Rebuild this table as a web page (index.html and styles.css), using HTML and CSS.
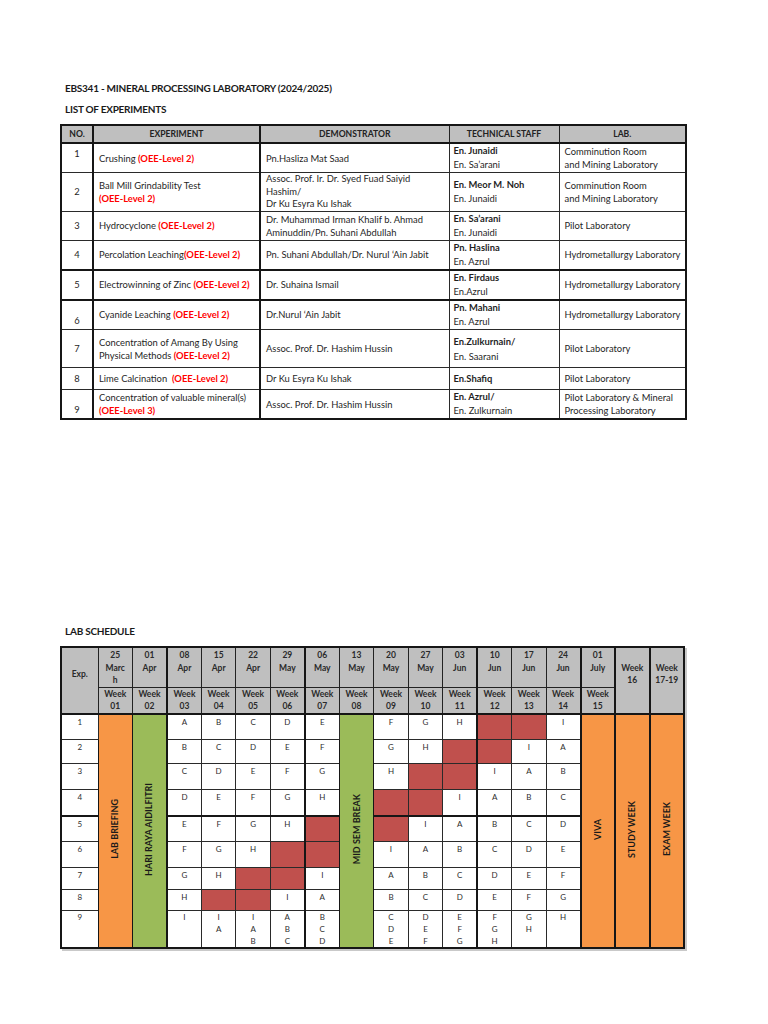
FILE: index.html
```html
<!DOCTYPE html>
<html>
<head>
<meta charset="utf-8">
<title>EBS341 Mineral Processing Laboratory</title>
<link rel="stylesheet" href="styles.css">
</head>
<body>
<div class="page">
  <h1 class="title">EBS341 - MINERAL PROCESSING LABORATORY (2024/2025)</h1>
  <h2 class="subtitle">LIST OF EXPERIMENTS</h2>

  <table class="exp">
    <colgroup>
      <col class="c-no"><col class="c-exp"><col class="c-dem"><col class="c-tech"><col class="c-lab">
    </colgroup>
    <thead>
      <tr><th>NO.</th><th class="thick-l">EXPERIMENT</th><th class="thick-l">DEMONSTRATOR</th><th>TECHNICAL STAFF</th><th>LAB.</th></tr>
    </thead>
    <tbody>
      <tr class="r1">
        <td class="no vt">1</td>
        <td class="thick-l">Crushing <span class="oee">(OEE-Level 2)</span></td>
        <td class="thick-l">Pn.Hasliza Mat Saad</td>
        <td class="tech"><b>En. Junaidi</b><br>En. Sa’arani</td>
        <td>Comminution Room<br>and Mining Laboratory</td>
      </tr>
      <tr class="r2">
        <td class="no">2</td>
        <td class="thick-l">Ball Mill Grindability Test<br><span class="oee">(OEE-Level 2)</span></td>
        <td class="thick-l dem3">Assoc. Prof. Ir. Dr. Syed Fuad Saiyid<br>Hashim/<br>Dr Ku Esyra Ku Ishak</td>
        <td class="tech"><b>En. Meor M. Noh</b><br>En. Junaidi</td>
        <td>Comminution Room<br>and Mining Laboratory</td>
      </tr>
      <tr class="r3">
        <td class="no">3</td>
        <td class="thick-l">Hydrocyclone <span class="oee">(OEE-Level 2)</span></td>
        <td class="thick-l">Dr. Muhammad Irman Khalif b. Ahmad<br>Aminuddin/Pn. Suhani Abdullah</td>
        <td class="tech"><b>En. Sa’arani</b><br>En. Junaidi</td>
        <td>Pilot Laboratory</td>
      </tr>
      <tr class="r4 thick-b">
        <td class="no">4</td>
        <td class="thick-l">Percolation Leaching<span class="oee">(OEE-Level 2)</span></td>
        <td class="thick-l">Pn. Suhani Abdullah/Dr. Nurul ‘Ain Jabit</td>
        <td class="tech"><b>Pn. Haslina</b><br>En. Azrul</td>
        <td>Hydrometallurgy Laboratory</td>
      </tr>
      <tr class="r5 thick-b">
        <td class="no">5</td>
        <td class="thick-l">Electrowinning of Zinc <span class="oee">(OEE-Level 2)</span></td>
        <td class="thick-l">Dr. Suhaina Ismail</td>
        <td class="tech"><b>En. Firdaus</b><br>En.Azrul</td>
        <td>Hydrometallurgy Laboratory</td>
      </tr>
      <tr class="r6">
        <td class="no vb">6</td>
        <td class="thick-l">Cyanide Leaching <span class="oee">(OEE-Level 2)</span></td>
        <td class="thick-l">Dr.Nurul ‘Ain Jabit</td>
        <td class="tech"><b>Pn. Mahani</b><br>En. Azrul</td>
        <td>Hydrometallurgy Laboratory</td>
      </tr>
      <tr class="r7">
        <td class="no">7</td>
        <td class="thick-l">Concentration of Amang By Using<br>Physical Methods <span class="oee">(OEE-Level 2)</span></td>
        <td class="thick-l">Assoc. Prof. Dr. Hashim Hussin</td>
        <td class="tech tall"><b>En.Zulkurnain/</b><br>En. Saarani</td>
        <td>Pilot Laboratory</td>
      </tr>
      <tr class="r8">
        <td class="no">8</td>
        <td class="thick-l">Lime Calcination &nbsp;<span class="oee">(OEE-Level 2)</span></td>
        <td class="thick-l">Dr Ku Esyra Ku Ishak</td>
        <td class="tech"><b>En.Shafiq</b></td>
        <td>Pilot Laboratory</td>
      </tr>
      <tr class="r9">
        <td class="no vb">9</td>
        <td class="thick-l">Concentration of valuable mineral(s)<br><span class="oee">(OEE-Level 3)</span></td>
        <td class="thick-l">Assoc. Prof. Dr. Hashim Hussin</td>
        <td class="tech"><b>En. Azrul/</b><br>En. Zulkurnain</td>
        <td>Pilot Laboratory &amp; Mineral<br>Processing Laboratory</td>
      </tr>
    </tbody>
  </table>

  <h2 class="sched-title">LAB SCHEDULE</h2>

  <table class="sched">
    <colgroup>
      <col class="c-e">
      <col><col><col><col><col><col><col><col><col><col><col><col><col><col><col><col><col>
    </colgroup>
    <thead>
      <tr class="hd1">
        <th rowspan="2" class="mid">Exp.</th>
        <th>25<br>Marc<br>h</th>
        <th>01<br>Apr</th>
        <th class="bl">08<br>Apr</th>
        <th>15<br>Apr</th>
        <th>22<br>Apr</th>
        <th>29<br>May</th>
        <th class="bl">06<br>May</th>
        <th>13<br>May</th>
        <th>20<br>May</th>
        <th>27<br>May</th>
        <th>03<br>Jun</th>
        <th class="bl">10<br>Jun</th>
        <th>17<br>Jun</th>
        <th>24<br>Jun</th>
        <th class="bl">01<br>July</th>
        <th rowspan="2" class="bl mid">Week<br>16</th>
        <th rowspan="2" class="bl mid">Week<br>17-19</th>
      </tr>
      <tr class="hd2">
        <th>Week<br>01</th>
        <th>Week<br>02</th>
        <th class="bl">Week<br>03</th>
        <th>Week<br>04</th>
        <th>Week<br>05</th>
        <th>Week<br>06</th>
        <th class="bl">Week<br>07</th>
        <th>Week<br>08</th>
        <th>Week<br>09</th>
        <th>Week<br>10</th>
        <th>Week<br>11</th>
        <th class="bl">Week<br>12</th>
        <th>Week<br>13</th>
        <th>Week<br>14</th>
        <th class="bl">Week<br>15</th>
      </tr>
    </thead>
    <tbody>
      <tr class="s1">
        <td>1</td>
        <td rowspan="9" class="band orange"><span class="vtext">LAB BRIEFING</span></td>
        <td rowspan="9" class="band green"><span class="vtext">HARI RAYA AIDILFITRI</span></td>
        <td class="bl">A</td><td>B</td><td>C</td><td>D</td><td class="bl">E</td>
        <td rowspan="9" class="band green"><span class="vtext">MID SEM BREAK</span></td>
        <td>F</td><td>G</td><td>H</td><td class="bl red"></td><td class="red"></td><td>I</td>
        <td rowspan="9" class="band orange bl"><span class="vtext">VIVA</span></td>
        <td rowspan="9" class="band orange bl"><span class="vtext">STUDY WEEK</span></td>
        <td rowspan="9" class="band orange bl"><span class="vtext">EXAM WEEK</span></td>
      </tr>
      <tr class="s2">
        <td>2</td>
        <td class="bl">B</td><td>C</td><td>D</td><td>E</td><td class="bl">F</td>
        <td>G</td><td>H</td><td class="red"></td><td class="bl red"></td><td>I</td><td>A</td>
      </tr>
      <tr class="s3">
        <td>3</td>
        <td class="bl">C</td><td>D</td><td>E</td><td>F</td><td class="bl">G</td>
        <td>H</td><td class="red"></td><td class="red"></td><td class="bl">I</td><td>A</td><td>B</td>
      </tr>
      <tr class="s4 tb">
        <td>4</td>
        <td class="bl">D</td><td>E</td><td>F</td><td>G</td><td class="bl">H</td>
        <td class="red"></td><td class="red"></td><td>I</td><td class="bl">A</td><td>B</td><td>C</td>
      </tr>
      <tr class="s5">
        <td>5</td>
        <td class="bl">E</td><td>F</td><td>G</td><td>H</td><td class="bl red"></td>
        <td class="red"></td><td>I</td><td>A</td><td class="bl">B</td><td>C</td><td>D</td>
      </tr>
      <tr class="s6">
        <td>6</td>
        <td class="bl">F</td><td>G</td><td>H</td><td class="red"></td><td class="bl red"></td>
        <td>I</td><td>A</td><td>B</td><td class="bl">C</td><td>D</td><td>E</td>
      </tr>
      <tr class="s7">
        <td>7</td>
        <td class="bl">G</td><td>H</td><td class="red"></td><td class="red"></td><td class="bl">I</td>
        <td>A</td><td>B</td><td>C</td><td class="bl">D</td><td>E</td><td>F</td>
      </tr>
      <tr class="s8">
        <td>8</td>
        <td class="bl">H</td><td class="red"></td><td class="red"></td><td>I</td><td class="bl">A</td>
        <td>B</td><td>C</td><td>D</td><td class="bl">E</td><td>F</td><td>G</td>
      </tr>
      <tr class="s9">
        <td>9</td>
        <td class="bl">I</td><td>I<br>A</td><td>I<br>A<br>B</td><td>A<br>B<br>C</td><td class="bl">B<br>C<br>D</td>
        <td>C<br>D<br>E</td><td>D<br>E<br>F</td><td>E<br>F<br>G</td><td class="bl">F<br>G<br>H</td><td>G<br>H</td><td>H</td>
      </tr>
    </tbody>
  </table>
</div>
</body>
</html>
```

FILE: styles.css
```css
* { box-sizing: border-box; }

body {
  margin: 0;
  background: #ffffff;
  font-family: "Lato", "Liberation Sans", sans-serif;
  color: #1f1f1f;
}

.page {
  width: 685px;
  padding: 81px 0 40px 60px;
}

.title,
.subtitle,
.sched-title {
  font-size: 10px;
  line-height: 14px;
  font-weight: 700;
  letter-spacing: -0.25px;
  margin: 0 0 7px 5px;
  color: #1a1a1a;
}

.subtitle { margin-bottom: 8px; }

/* ---------- experiments table ---------- */
.exp {
  width: 625px;
  table-layout: fixed;
  border-collapse: collapse;
  border: 2px solid #161616;
  font-size: 9.4px;
  line-height: 13px;
}

.c-no { width: 32px; }
.c-exp { width: 167px; }
.c-dem { width: 189px; }
.c-tech { width: 110px; }
.c-lab { width: 127px; }

.exp th {
  background: #bfbfbf;
  font-weight: 700;
  font-size: 8.6px;
  height: 18px;
  padding: 0;
  border: 1px solid #222;
  border-bottom: 2px solid #161616;
  color: #222;
}

.exp td {
  border: 1px solid #2a2a2a;
  padding: 0 2px 0 5px;
  vertical-align: middle;
}

.exp .thick-l { border-left: 2px solid #161616; }
.exp tr.thick-b td { border-bottom: 2px solid #161616; }

.exp td.no { text-align: center; padding: 0; }
.exp td.vt { vertical-align: top; padding-top: 3px; }
.exp td.vb { vertical-align: bottom; padding-bottom: 2px; }
.exp td.tech { line-height: 14px; padding-left: 4px; }
.exp td.tall { line-height: 15px; }
.exp td.dem3 { line-height: 12.5px; }

.exp .oee { color: #ff0000; font-weight: 700; }
.exp b { font-weight: 700; }

.exp .r1 td { height: 29px; }
.exp .r2 td { height: 38px; }
.exp .r3 td { height: 29px; }
.exp .r4 td { height: 27px; }
.exp .r5 td { height: 28px; }
.exp .r6 td { height: 30px; }
.exp .r7 td { height: 38px; }
.exp .r8 td { height: 22px; }
.exp .r9 td { height: 29px; }

/* ---------- schedule ---------- */
.sched-title {
  margin: 204px 0 8px 5px;
}

.sched {
  width: 625px;
  table-layout: fixed;
  border-collapse: collapse;
  border: 2px solid #161616;
  font-size: 8px;
  line-height: 12px;
  box-shadow: 2px 2px 0 #c9c9c9;
}

.c-e { width: 37px; }

.sched th {
  background: #bfbfbf;
  font-weight: 700;
  font-size: 8.5px;
  line-height: 12.5px;
  color: #2a2a2a;
  border: 1px solid #222;
  padding: 1px 0 0;
  vertical-align: top;
  text-align: center;
}

.sched .hd1 th { height: 38px; }
.sched .hd2 th { height: 25px; padding-top: 0; border-bottom: 2px solid #161616; }
.sched th.mid { vertical-align: middle; padding: 0 0 12px; border-bottom: 2px solid #161616; }

.sched td {
  border: 1px solid #2a2a2a;
  padding: 1px 0 0;
  text-align: center;
  vertical-align: top;
  color: #2e2e2e;
}

.sched .bl { border-left: 2px solid #161616; }
.sched tr.tb td { border-bottom: 2px solid #161616; }

.sched .s1 td { height: 26px; }
.sched .s2 td { height: 24px; }
.sched .s3 td { height: 26px; }
.sched .s4 td { height: 26px; }
.sched .s5 td { height: 26px; }
.sched .s6 td { height: 26px; }
.sched .s7 td { height: 22px; }
.sched .s8 td { height: 21px; }
.sched .s9 td { height: 35px; padding-top: 0; }

.sched td.red { background: #c0504d; }

.sched td.band {
  height: auto;
  vertical-align: middle;
  padding: 0;
  border: 1px solid #161616;
  color: #1a1a1a;
}

.sched td.band.bl { border-left: 2px solid #161616; }
.orange { background: #f79646; }
.green { background: #9bbb59; }

.vtext {
  display: inline-block;
  writing-mode: vertical-rl;
  transform: rotate(180deg);
  font-weight: 700;
  font-size: 9px;
  line-height: 10px;
  white-space: nowrap;
}
```
